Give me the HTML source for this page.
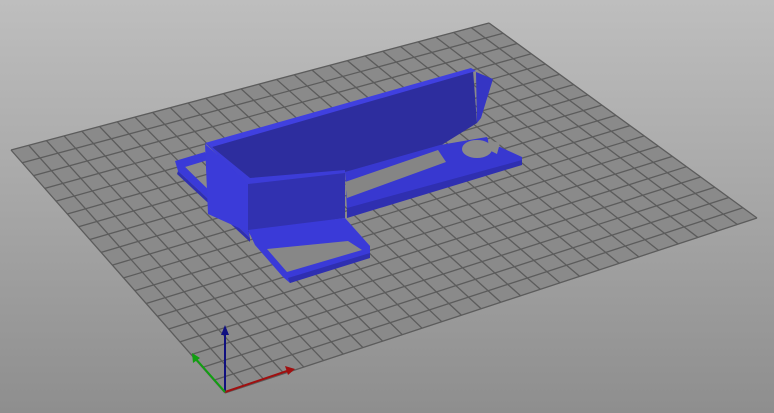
<!DOCTYPE html>
<html><head><meta charset="utf-8"><style>
html,body{margin:0;padding:0;width:774px;height:413px;overflow:hidden}
svg{display:block}
</style></head><body>
<svg id="s" width="774" height="413" viewBox="0 0 774 413" xmlns="http://www.w3.org/2000/svg">
<defs><linearGradient id="bg" x1="0" y1="0" x2="0" y2="1">
<stop offset="0" stop-color="#bebebe"/><stop offset="1" stop-color="#8e8e8e"/></linearGradient></defs>
<rect width="774" height="413" fill="url(#bg)"/>
<polygon points="11,150 489,23 757,218 225,393" fill="#8a8a8a"/>
<g id="grid" stroke="#5c5c5c" stroke-width="1.3"></g>
<g id="obj">
<polygon points="175,161 205,152 208,160 185,167 248,228 250,238 178,171" fill="#3a3ad8"/>
<polygon points="178,171 250,238 250,242 177,174" fill="#2f2fb0"/>
<polygon points="210,145 473,70 477,123 440,146 400,160 345,172 248,181" fill="#2d2d9e"/>
<polygon points="205,143 471,68 476,71 212,147" fill="#4040e0"/>
<polygon points="476,72 493,79 481,118 477,123" fill="#3535c4"/>
<polygon points="345,172 440,145 487,137 490,145 500,147 522,157 522,162 347,210" fill="#3838d0"/>
<polygon points="347,208 522,160 522,165 347,218" fill="#2f2fb0"/>
<polygon points="345,182 438,150 446,162 347,198" fill="#858585"/>
<ellipse cx="477" cy="149" rx="15" ry="9" fill="#8a8a8a"/>
<polygon points="488,140 500,143 497,154 489,150" fill="#8a8a8a"/>
<polygon points="205,144 248,181 248,232 208,214" fill="#3b3bd9"/>
<polygon points="248,181 345,172 345,218 248,232" fill="#3131b0"/>
<polygon points="205,143 212,147 250,178 345,170 345,173 248,184" fill="#3c3cd8"/>
<polygon points="248,230 345,218 370,246 370,257 290,283 283,277 255,245" fill="#3a3ad8"/>
<polygon points="267,249 348,241 362,250 287,272" fill="#878787"/>
<polygon points="288,278 370,253 370,258 290,283" fill="#2f2fb0"/>
</g>
<line x1="225" y1="392" x2="225" y2="330" stroke="#101080" stroke-width="2"/>
<polygon points="225,325 221,335 229,335" fill="#101080"/>
<line x1="225" y1="392" x2="290" y2="370" stroke="#a01010" stroke-width="2"/>
<polygon points="295,369 285,366 288,375" fill="#a01010"/>
<line x1="225" y1="392" x2="195" y2="358" stroke="#10a010" stroke-width="2"/>
<polygon points="192,353 193,363 200,358" fill="#10a010"/>
</svg>
<script>
(function(){
var L=[11,150],T=[489,23],R=[757,218],B=[225,393];
var g=document.getElementById('grid');var N=27,M=19,out='';
function lerp(a,b,t){return [a[0]+(b[0]-a[0])*t,a[1]+(b[1]-a[1])*t];}
for(var i=0;i<=N;i++){var t=i/N;var p=lerp(L,T,t),q=lerp(B,R,t);
out+='<line x1="'+p[0]+'" y1="'+p[1]+'" x2="'+q[0]+'" y2="'+q[1]+'"/>';}
for(var j=0;j<=M;j++){var t=j/M;var p=lerp(L,B,t),q=lerp(T,R,t);
out+='<line x1="'+p[0]+'" y1="'+p[1]+'" x2="'+q[0]+'" y2="'+q[1]+'"/>';}
g.innerHTML=out;
})();
</script>
</body></html>
